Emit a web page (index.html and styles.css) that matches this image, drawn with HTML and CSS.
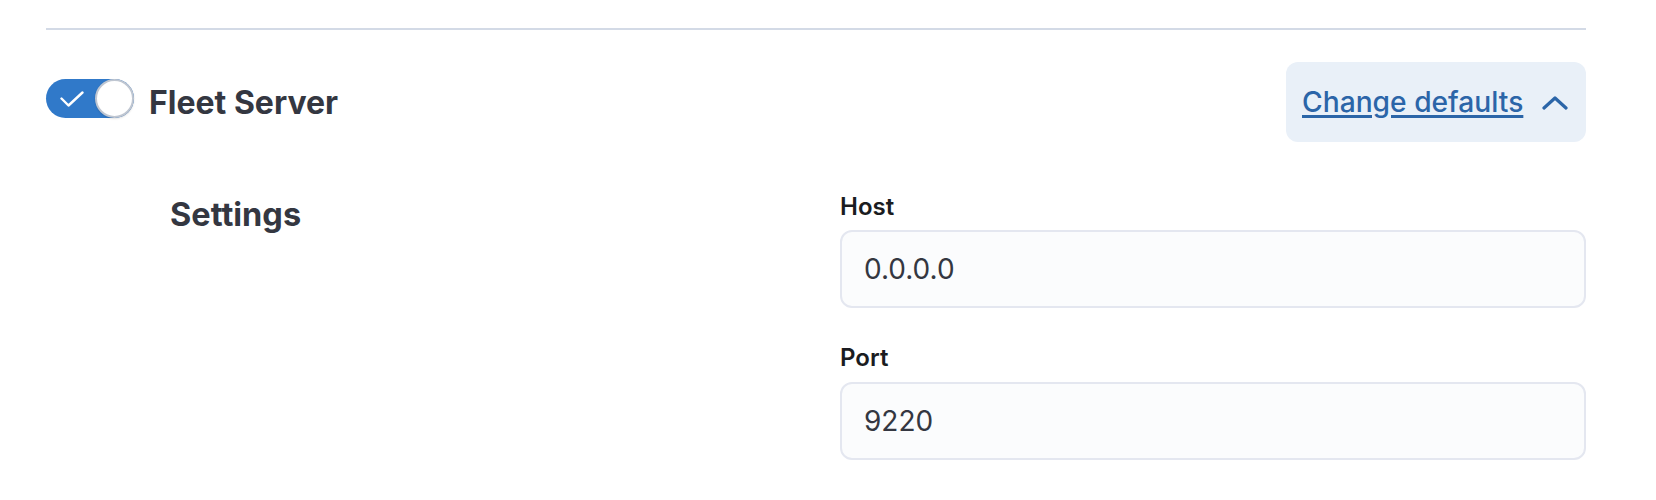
FILE: index.html
```html
<!DOCTYPE html>
<html lang="en">
<head>
<meta charset="utf-8">
<title>Fleet Server</title>
<link rel="stylesheet" href="styles.css">
</head>
<body>
<div class="page">
  <div class="divider"></div>
  <div class="header">
    <div class="switch-group">
      <button class="switch" type="button" role="switch" aria-checked="true">
        <svg class="switch-check" width="24" height="16" viewBox="0 0 24 16" aria-hidden="true">
          <path d="M1.5 7.5 L8.5 14.5 L22.5 1.5" fill="none" stroke="#ffffff" stroke-width="2.4" stroke-linecap="round" stroke-linejoin="round"/>
        </svg>
        <span class="switch-knob"></span>
      </button>
      <span class="switch-title">Fleet Server</span>
    </div>
    <button class="defaults-btn" type="button">
      <span class="defaults-text">Change defaults</span>
      <svg class="chevron" width="26" height="14" viewBox="0 0 26 14" aria-hidden="true">
        <path d="M2 12 L13 2 L24 12" fill="none" stroke="#2b65a8" stroke-width="3.2" stroke-linecap="round" stroke-linejoin="round"/>
      </svg>
    </button>
  </div>
  <div class="settings">
    <div class="settings-side">
      <h3 class="settings-title">Settings</h3>
    </div>
    <div class="settings-form">
      <label class="field-label" for="host">Host</label>
      <input class="field-input" id="host" type="text" value="0.0.0.0">
      <label class="field-label field-label-next" for="port">Port</label>
      <input class="field-input" id="port" type="text" value="9220">
    </div>
  </div>
</div>
</body>
</html>
```

FILE: styles.css
```css
html, body {
  margin: 0;
  padding: 0;
  background: #ffffff;
}

body {
  font-family: Inter, "Noto Sans", "Liberation Sans", sans-serif;
  color: #343741;
  overflow: hidden;
  height: 500px;
}

.page {
  width: 1540px;
  padding-left: 46px;
}

.divider {
  margin-top: 28px;
  height: 1.5px;
  background: #d3dae6;
}

.header {
  margin-top: 32.5px;
  height: 80px;
  display: flex;
  align-items: center;
  justify-content: space-between;
}

.switch-group {
  display: flex;
  align-items: center;
  gap: 15px;
}

.switch {
  position: relative;
  width: 88px;
  height: 39px;
  margin-bottom: 8px;
  padding: 0;
  border: none;
  border-radius: 20px;
  background: #3079c9;
  cursor: pointer;
  flex-shrink: 0;
}

.switch-check {
  position: absolute;
  top: 12px;
  left: 14px;
}

.switch-knob {
  position: absolute;
  right: 0;
  top: 0;
  width: 35px;
  height: 35px;
  border-radius: 50%;
  background: #ffffff;
  border: 2px solid #bfc6d1;
  box-shadow: 0 1px 2px rgba(0, 0, 0, 0.12);
}

.switch-title {
  font-size: 32px;
  font-weight: 700;
  color: #343741;
  line-height: 40px;
  white-space: nowrap;
  margin-top: 2px;
}

.defaults-btn {
  width: 300px;
  height: 80px;
  box-sizing: border-box;
  border: none;
  border-radius: 12px;
  background: #e9f0f8;
  display: flex;
  align-items: center;
  justify-content: space-between;
  padding: 0 18px 0 16px;
  font-family: inherit;
  cursor: pointer;
  flex-shrink: 0;
}

.defaults-text {
  font-size: 28.2px;
  font-weight: 500;
  color: #2b65a8;
  text-decoration: underline;
  text-decoration-thickness: 2.5px;
  text-underline-offset: 3px;
  line-height: 40px;
  white-space: nowrap;
}

.chevron {
  display: block;
  margin-top: 1px;
  flex-shrink: 0;
}

.settings {
  display: grid;
  grid-template-columns: 794px 746px;
}

.settings-side {
  padding-left: 124px;
}

.settings-title {
  margin: 53px 0 0 0;
  font-size: 32.5px;
  font-weight: 700;
  line-height: 40px;
  color: #343741;
}

.settings-form {
  display: flex;
  flex-direction: column;
}

.field-label {
  margin-top: 46.5px;
  font-size: 24px;
  font-weight: 600;
  line-height: 36px;
  color: #1a1c21;
}

.field-label-next {
  margin-top: 32px;
}

.field-input {
  margin-top: 5.5px;
  box-sizing: border-box;
  width: 746px;
  height: 78px;
  border: 2px solid #e4e7f0;
  border-radius: 12px;
  background: #fbfcfd;
  padding: 0 22px;
  font-family: inherit;
  font-size: 28px;
  color: #343741;
  outline: none;
}
```
